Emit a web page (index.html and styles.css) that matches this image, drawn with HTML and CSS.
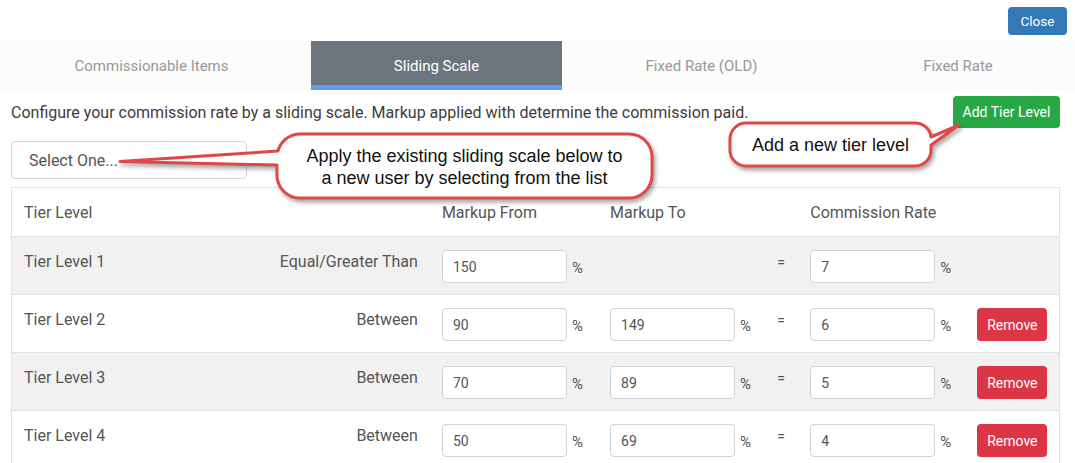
FILE: index.html
```html
<!DOCTYPE html>
<html>
<head>
<meta charset="utf-8">
<link rel="stylesheet" href="styles.css">
</head>
<body>
<div class="topbar">
  <button class="btn btn-close">Close</button>
</div>
<nav class="tabs">
  <div class="tab tab-first">Commissionable Items</div>
  <div class="tab active">Sliding Scale</div>
  <div class="tab">Fixed Rate (OLD)</div>
  <div class="tab">Fixed Rate</div>
</nav>
<main class="content">
  <div class="intro">
    <p class="intro-text">Configure your commission rate by a sliding scale. Markup applied with determine the commission paid.</p>
    <button class="btn btn-add">Add Tier Level</button>
  </div>
  <div class="select">Select One...</div>
  <table class="tiers">
    <colgroup>
      <col class="c-name"><col class="c-rule"><col class="c-from"><col class="c-to"><col class="c-eq"><col class="c-rate"><col class="c-act">
    </colgroup>
    <thead>
      <tr><th>Tier Level</th><th></th><th>Markup From</th><th>Markup To</th><th></th><th>Commission Rate</th><th></th></tr>
    </thead>
    <tbody>
      <tr class="alt">
        <td>Tier Level 1</td><td class="rule">Equal/Greater Than</td>
        <td><div class="pair"><span class="field">150</span><span class="pct">%</span></div></td>
        <td></td><td class="eq">=</td>
        <td><div class="pair"><span class="field">7</span><span class="pct">%</span></div></td>
        <td></td>
      </tr>
      <tr>
        <td>Tier Level 2</td><td class="rule">Between</td>
        <td><div class="pair"><span class="field">90</span><span class="pct">%</span></div></td>
        <td><div class="pair"><span class="field">149</span><span class="pct">%</span></div></td>
        <td class="eq">=</td>
        <td><div class="pair"><span class="field">6</span><span class="pct">%</span></div></td>
        <td><button class="btn btn-remove">Remove</button></td>
      </tr>
      <tr class="alt">
        <td>Tier Level 3</td><td class="rule">Between</td>
        <td><div class="pair"><span class="field">70</span><span class="pct">%</span></div></td>
        <td><div class="pair"><span class="field">89</span><span class="pct">%</span></div></td>
        <td class="eq">=</td>
        <td><div class="pair"><span class="field">5</span><span class="pct">%</span></div></td>
        <td><button class="btn btn-remove">Remove</button></td>
      </tr>
      <tr>
        <td>Tier Level 4</td><td class="rule">Between</td>
        <td><div class="pair"><span class="field">50</span><span class="pct">%</span></div></td>
        <td><div class="pair"><span class="field">69</span><span class="pct">%</span></div></td>
        <td class="eq">=</td>
        <td><div class="pair"><span class="field">4</span><span class="pct">%</span></div></td>
        <td><button class="btn btn-remove">Remove</button></td>
      </tr>
    </tbody>
  </table>
</main>

<svg class="callouts" width="1075" height="463" viewBox="0 0 1075 463">
  <path class="bubble" d="M 300 134 H 629 A 23 23 0 0 1 652 157 V 175 A 23 23 0 0 1 629 198 H 300 A 23 23 0 0 1 277 175 V 165 L 120 161.5 L 278 151 A 23 23 0 0 1 300 134 Z"/>
  <path class="bubble" d="M 746 123 H 915 A 16 16 0 0 1 931 137 L 959 125 L 931 145 V 150 A 16 16 0 0 1 915 166 H 746 A 16 16 0 0 1 730 150 V 139 A 16 16 0 0 1 746 123 Z"/>
</svg>
<div class="note note-apply">Apply the existing sliding scale below to<br>a new user by selecting from the list</div>
<div class="note note-add">Add a new tier level</div>
</body>
</html>
```
FILE: styles.css
```css
* { box-sizing: border-box; }
html, body { margin: 0; padding: 0; }
body {
  width: 1075px;
  height: 463px;
  overflow: hidden;
  position: relative;
  background: #fff;
  font-family: Roboto, "Liberation Sans", sans-serif;
  color: #555;
}

.btn {
  font-family: Roboto, "Liberation Sans", sans-serif;
  border: 0;
  border-radius: 4px;
  color: #fff;
  padding: 0;
  cursor: pointer;
}

.topbar {
  height: 41px;
  display: flex;
  justify-content: flex-end;
  align-items: flex-start;
  padding: 7px 8px 0 0;
}
.btn-close {
  width: 59px;
  height: 28px;
  background: #337ab7;
  font-size: 13.5px;
}

.tabs {
  display: grid;
  grid-template-columns: 311px 251px 279px 1fr;
  height: 49px;
  background: #fcfcfc;
}
.tab {
  display: flex;
  align-items: center;
  justify-content: center;
  padding-top: 6px;
  border-bottom: 5px solid transparent;
  font-size: 15px;
  color: #999;
}
.tab-first { padding-right: 8px; }
.tab.active {
  background: #6c757d;
  color: #fff;
  border-bottom-color: #5f9df5;
}

.content {
  padding: 0 15px 0 11px;
}
.intro {
  display: flex;
  justify-content: space-between;
  align-items: center;
  margin-top: 6px;
}
.intro-text {
  margin: 0;
  font-size: 16px;
  color: #3c3c3c;
}
.btn-add {
  width: 107px;
  height: 32px;
  background: #28a745;
  font-size: 14px;
}

.select {
  margin-top: 13px;
  width: 236px;
  height: 38px;
  border: 1px solid #d3d7dc;
  border-radius: 4px;
  padding-left: 17px;
  display: flex;
  align-items: center;
  font-size: 16px;
  color: #555;
}

.tiers {
  margin-top: 8px;
  width: 1049px;
  table-layout: fixed;
  border-collapse: collapse;
  border: 1px solid #dee2e6;
  font-size: 16px;
  color: #555;
}
.c-name { width: 200px; }
.c-rule { width: 218px; }
.c-from { width: 168px; }
.c-to { width: 167px; }
.c-eq { width: 33px; }
.c-rate { width: 167px; }
.c-act { width: 94px; }

.tiers th {
  font-weight: normal;
  text-align: left;
  padding: 14px 12px 12px;
  line-height: 22px;
  border-bottom: 1px solid #dee2e6;
}
.tiers td {
  padding: 13px 12px 11px;
  height: 58px;
  line-height: 24px;
  vertical-align: top;
  border-bottom: 1px solid #dee2e6;
  white-space: nowrap;
}
.tiers tr.alt td { background: #f1f1f1; }
.tiers td.rule { text-align: right; }
.tiers td.eq { font-size: 14px; }

.pair {
  display: flex;
  align-items: center;
  height: 33px;
}
.field {
  flex: none;
  width: 125px;
  height: 33px;
  line-height: 31px;
  padding: 1px 10px 0;
  background: #fff;
  border: 1px solid #ced4da;
  border-radius: 4px;
  font-size: 14px;
  color: #555;
}
.pct {
  margin-left: 5px;
  font-size: 15px;
  line-height: 20px;
  padding-top: 2px;
}

.btn-remove {
  width: 70px;
  height: 33px;
  background: #dc3545;
  font-size: 14px;
  display: block;
}

.callouts {
  position: absolute;
  left: 0;
  top: 0;
  pointer-events: none;
  filter: drop-shadow(2px 3px 2px rgba(0, 0, 0, 0.35));
}
.bubble {
  fill: #fff;
  stroke: #e04848;
  stroke-width: 3;
  stroke-linejoin: round;
}
.note {
  position: absolute;
  display: flex;
  align-items: center;
  justify-content: center;
  text-align: center;
  font-family: "Liberation Sans", Arial, sans-serif;
  font-size: 18px;
  line-height: 22px;
  color: #111;
}
.note-apply { left: 277px; top: 135px; width: 375px; height: 63px; }
.note-add { left: 730px; top: 123px; width: 201px; height: 43px; }
```
